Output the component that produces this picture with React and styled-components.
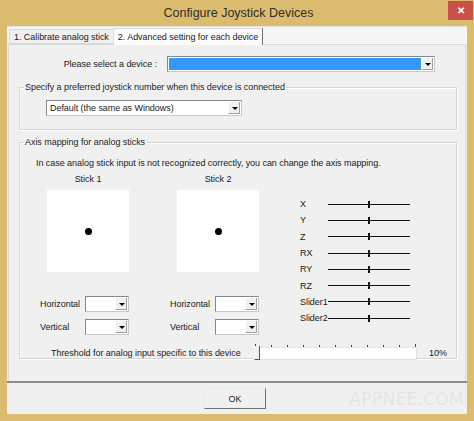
import styled, { createGlobalStyle } from "styled-components";

const GlobalStyle = createGlobalStyle`
  html, body {
    margin: 0;
    padding: 0;
    background: #dbbc6e;
  }
  body {
    font-family: "Liberation Sans", Arial, sans-serif;
    font-size: 9px;
    letter-spacing: -0.05px;
    color: #1a1a1a;
  }
`;

const AXES = ["X", "Y", "Z", "RX", "RY", "RZ", "Slider1", "Slider2"];

export default function App() {
  return (
    <>
      <GlobalStyle />
      <Window>
        <TitleBar>
          <span />
          <Title>Configure Joystick Devices</Title>
          <CloseButton>✕</CloseButton>
        </TitleBar>

        <Client>
          <TabStrip>
            <Tab>1. Calibrate analog stick</Tab>
            <Tab $active>2. Advanced setting for each device</Tab>
          </TabStrip>

          <Panel>
            <DeviceRow>
              <DeviceLabel>Please select a device :</DeviceLabel>
              <Combo $width={268} $selected>
                <ComboText $selected />
                <ComboArrow />
              </Combo>
            </DeviceRow>

            <Group $height={48}>
              <Legend>Specify a preferred joystick number when this device is connected</Legend>
              <PreferredRow>
                <Combo $width={196}>
                  <ComboText>Default (the same as Windows)</ComboText>
                  <ComboArrow />
                </Combo>
              </PreferredRow>
            </Group>

            <Group $height={222} $top={7}>
              <Legend>Axis mapping for analog sticks</Legend>
              <Intro>
                In case analog stick input is not recognized correctly, you can change the axis mapping.
              </Intro>

              <MappingArea>
                <Sticks>
                  {[1, 2].map((n) => (
                    <StickColumn key={n}>
                      <StickTitle>Stick {n}</StickTitle>
                      <StickPad>
                        <StickDot />
                      </StickPad>
                    </StickColumn>
                  ))}
                  {[1, 2].map((n) => (
                    <AxisSelects key={"s" + n}>
                      <SelectRow>
                        <SelectLabel>Horizontal</SelectLabel>
                        <Combo $width={45}>
                          <ComboText />
                          <ComboArrow />
                        </Combo>
                      </SelectRow>
                      <SelectRow>
                        <SelectLabel>Vertical</SelectLabel>
                        <Combo $width={45}>
                          <ComboText />
                          <ComboArrow />
                        </Combo>
                      </SelectRow>
                    </AxisSelects>
                  ))}
                </Sticks>

                <AxisList>
                  {AXES.map((a) => (
                    <AxisRow key={a}>
                      <AxisName>{a}</AxisName>
                      <AxisTrack>
                        <AxisMark />
                      </AxisTrack>
                    </AxisRow>
                  ))}
                </AxisList>
              </MappingArea>

              <ThresholdRow>
                <ThresholdLabel>Threshold for analog input specific to this device</ThresholdLabel>
                <Slider>
                  <Ticks>
                    {Array.from({ length: 11 }).map((_, i) => (
                      <Tick key={i} $big={i === 0 || i === 10} />
                    ))}
                  </Ticks>
                  <SliderChannel>
                    <SliderThumb />
                  </SliderChannel>
                </Slider>
                <Percent>10%</Percent>
              </ThresholdRow>
            </Group>
          </Panel>

          <Footer>
            <span />
            <OkButton>OK</OkButton>
            <Watermark>APPNEE.COM</Watermark>
          </Footer>
        </Client>
      </Window>
    </>
  );
}

const Window = styled.div`
  width: 474px;
  height: 421px;
  box-sizing: border-box;
  padding: 0 7px 7px;
  display: flex;
  flex-direction: column;
  background: #dbbc6e;
`;

const TitleBar = styled.div`
  height: 26px;
  flex: none;
  display: grid;
  grid-template-columns: 1fr auto 1fr;
  align-items: start;
`;

const Title = styled.div`
  font-size: 12.5px;
  letter-spacing: 0;
  color: #2f2f2f;
  line-height: 26px;
  padding-left: 3px;
`;

const CloseButton = styled.div`
  justify-self: end;
  margin-right: -6px;
  width: 25px;
  height: 19px;
  margin-top: 1px;
  background: #c9514b;
  color: #fff;
  font-size: 10px;
  font-weight: bold;
  display: flex;
  align-items: center;
  justify-content: center;
`;

const Client = styled.div`
  flex: 1;
  display: flex;
  flex-direction: column;
  background: #f0f0f0;
`;

const TabStrip = styled.div`
  height: 17px;
  display: flex;
  align-items: flex-end;
  padding-left: 2px;
  background: #f5f5f5;
  border-top: 1px solid #e2e2e2;
`;

const Tab = styled.div`
  height: ${(p) => (p.$active ? "17px" : "15px")};
  line-height: ${(p) => (p.$active ? "16px" : "15px")};
  padding: 0 4px;
  box-sizing: border-box;
  background: ${(p) => (p.$active ? "#fcfcfc" : "#f0f0f0")};
  border: 1px solid #d9d9d9;
  border-bottom: ${(p) => (p.$active ? "none" : "1px solid #d9d9d9")};
  border-right: ${(p) => (p.$active ? "1px solid #707070" : "none")};
  margin-bottom: ${(p) => (p.$active ? "-1px" : "0")};
  position: relative;
  z-index: ${(p) => (p.$active ? 1 : 0)};
  white-space: nowrap;
`;

const Panel = styled.div`
  height: 337px;
  box-sizing: border-box;
  margin: 0 1px;
  border: 1px solid #d9d9d9;
  border-bottom: none;
  background: #f0f0f0;
  padding: 11px 8px 0 10px;
  display: flex;
  flex-direction: column;
`;

const DeviceRow = styled.div`
  display: flex;
  align-items: center;
  gap: 10px;
  padding-left: 40px;
  height: 16px;
`;

const DeviceLabel = styled.div`
  width: 98px;
  text-align: right;
`;

const Combo = styled.div`
  width: ${(p) => p.$width}px;
  height: 16px;
  box-sizing: border-box;
  display: flex;
  border: 1px solid #828790;
  border-right-color: #c8c8c8;
  border-bottom-color: #c8c8c8;
  background: #fff;
  padding: 1px;
`;

const ComboText = styled.div`
  flex: 1;
  background: ${(p) => (p.$selected ? "#3399ff" : "#fff")};
  line-height: 12px;
  padding-left: 2px;
  white-space: nowrap;
  overflow: hidden;
`;

const ComboArrow = styled.div`
  width: 12px;
  flex: none;
  background: #f0f0f0;
  border-left: 1px solid #fff;
  border-right: 1px solid #a0a0a0;
  border-bottom: 1px solid #a0a0a0;
  box-sizing: border-box;
  position: relative;
  &::after {
    content: "";
    position: absolute;
    left: 3px;
    top: 5px;
    border-left: 3px solid transparent;
    border-right: 3px solid transparent;
    border-top: 3px solid #000;
  }
`;

const Group = styled.fieldset`
  margin: ${(p) => p.$top || 10}px 0 0;
  padding: 0;
  height: ${(p) => p.$height}px;
  box-sizing: border-box;
  border: 1px solid #d5d5d5;
  box-shadow: inset 1px 1px 0 #fff, 1px 1px 0 #fff;
  min-width: 0;
  display: flex;
  flex-direction: column;
`;

const Legend = styled.legend`
  margin-left: 4px;
  padding: 0 1px;
  line-height: 11px;
`;

const PreferredRow = styled.div`
  padding: 7px 0 0 26px;
`;

const Intro = styled.div`
  padding: 10px 0 0 16px;
  white-space: nowrap;
`;

const MappingArea = styled.div`
  display: flex;
  padding: 5px 0 0 27px;
  height: 168px;
`;

const Sticks = styled.div`
  display: grid;
  grid-template-columns: 82px 82px;
  column-gap: 48px;
  grid-template-rows: auto auto;
  row-gap: 24px;
  align-content: start;
`;

const StickColumn = styled.div`
  display: flex;
  flex-direction: column;
  align-items: center;
  gap: 5px;
`;

const StickTitle = styled.div`
  line-height: 12px;
`;

const StickPad = styled.div`
  width: 82px;
  height: 82px;
  background: #fff;
  display: flex;
  align-items: center;
  justify-content: center;
`;

const StickDot = styled.div`
  width: 7px;
  height: 7px;
  border-radius: 50%;
  background: #000;
`;

const AxisSelects = styled.div`
  display: flex;
  flex-direction: column;
  gap: 7px;
  margin-left: -7px;
`;

const SelectRow = styled.div`
  display: flex;
  align-items: center;
`;

const SelectLabel = styled.div`
  width: 46px;
`;

const AxisList = styled.div`
  margin-left: 41px;
  padding-top: 23px;
  display: flex;
  flex-direction: column;
`;

const AxisRow = styled.div`
  display: flex;
  align-items: center;
  height: 16.3px;
`;

const AxisName = styled.div`
  width: 28px;
`;

const AxisTrack = styled.div`
  width: 82px;
  height: 1px;
  background: #111;
  position: relative;
`;

const AxisMark = styled.div`
  position: absolute;
  left: 40px;
  top: -3px;
  width: 2px;
  height: 7px;
  background: #111;
`;

const ThresholdRow = styled.div`
  display: flex;
  align-items: flex-end;
  padding-left: 31px;
`;

const ThresholdLabel = styled.div`
  width: 203px;
  line-height: 14px;
`;

const Slider = styled.div`
  width: 163px;
  display: flex;
  flex-direction: column;
`;

const Ticks = styled.div`
  display: flex;
  justify-content: space-between;
  align-items: flex-end;
  height: 6px;
  padding: 0 1px;
`;

const Tick = styled.div`
  width: 1px;
  height: ${(p) => (p.$big ? 3 : 2)}px;
  background: #444;
`;

const SliderChannel = styled.div`
  height: 13px;
  background: #fff;
  border: 1px solid #e3e3e3;
  box-sizing: border-box;
  margin-left: 2px;
  position: relative;
`;

const SliderThumb = styled.div`
  position: absolute;
  left: -3px;
  top: -2px;
  width: 4px;
  height: 13px;
  border-left: 1px solid #f8f8f8;
  border-right: 1px solid #555;
  border-bottom: 1px solid #555;
  background: #f0f0f0;
`;

const Percent = styled.div`
  margin-left: 12px;
  line-height: 14px;
`;

const Footer = styled.div`
  flex: 1;
  border-top: 2px solid #8c8c8c;
  display: grid;
  grid-template-columns: 1fr auto 1fr;
  align-items: start;
  padding-top: 5px;
`;

const OkButton = styled.div`
  width: 62px;
  height: 21px;
  box-sizing: border-box;
  border: 1px solid #e9e9e9;
  border-right-color: #707070;
  border-bottom-color: #707070;
  background: #f0f0f0;
  display: flex;
  align-items: center;
  justify-content: center;
  margin-left: -4px;
`;

const Watermark = styled.div`
  justify-self: end;
  margin-right: 3px;
  font-family: "DejaVu Sans", sans-serif;
  font-size: 17px;
  letter-spacing: 0.3px;
  color: #e4e4e4;
  margin-top: 1px;
`;
